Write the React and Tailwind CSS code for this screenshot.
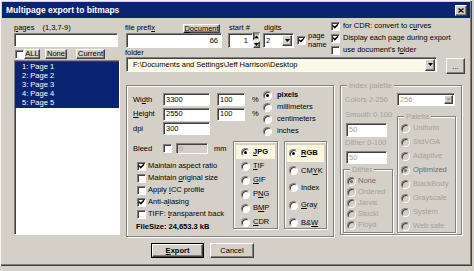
import React from 'react'

const sunken = 'border border-t-[#808080] border-l-[#808080] border-b-white border-r-white shadow-[inset_1px_1px_0_#404040]'
const raised = 'border border-t-white border-l-white border-b-[#404040] border-r-[#404040] shadow-[inset_-1px_-1px_0_#808080]'
const etched = 'border border-[#808080] shadow-[inset_1px_1px_0_#ffffff,1px_1px_0_#ffffff]'
const dim = 'text-[#a4a199]'

function Check({ on, className = '' }) {
  return (
    <span className={`flex h-[9px] w-[9px] shrink-0 items-center justify-center bg-white ${sunken} ${className}`}>
      {on && (
        <svg width="7" height="7" viewBox="0 0 7 7">
          <path d="M1 2.8 L2.8 4.6 L6 1.2" stroke="#000" strokeWidth="1.5" fill="none" />
        </svg>
      )}
    </span>
  )
}

function Radio({ on, off }) {
  return (
    <span
      className={`flex h-[9px] w-[9px] shrink-0 items-center justify-center rounded-full border border-t-[#808080] border-l-[#808080] border-b-white border-r-white shadow-[inset_1px_1px_0_#404040] ${off ? 'bg-[#d4d0c8]' : 'bg-white'}`}
    >
      {on && <span className={`h-[3px] w-[3px] rounded-full ${off ? 'bg-[#77746d]' : 'bg-black'}`} />}
    </span>
  )
}

function Arrow({ className = '', off }) {
  return (
    <span className={`flex items-center justify-center bg-[#d4d0c8] ${raised} ${className}`}>
      <svg width="5" height="3" viewBox="0 0 5 3">
        <path d="M0 0 H5 L2.5 3 Z" fill={off ? '#a4a199' : '#000'} />
      </svg>
    </span>
  )
}

function Group({ title, className = '', off, children }) {
  return (
    <fieldset className={`${etched} ${className}`}>
      {title && (
        <legend className={`ml-[6px] bg-[#d4d0c8] px-[2px] leading-[9px] ${off ? dim : ''}`}>{title}</legend>
      )}
      {children}
    </fieldset>
  )
}

const dithers = ['None', 'Ordered', 'Jarvis', 'Stucki', 'Floyd']
const palettes = ['Uniform', 'StdVGA', 'Adaptive', 'Optimized', 'BlackBody', 'Grayscale', 'System', 'Web safe']

export default function App() {
  return (
    <div className="h-[271px] w-[474px] overflow-hidden bg-[#d4d0c8] font-['Liberation_Sans',Arial,sans-serif] text-[7.5px] leading-none text-black">
      <div className="flex h-[266px] w-[472px] flex-col p-[2px] shadow-[inset_1px_1px_0_#f4f3ef,inset_-1px_-1px_0_#404040,inset_-2px_-2px_0_#808080]">
        <div className="flex h-[16px] shrink-0 items-center bg-[#0b2472] pl-[4px] pr-[3px]">
          <span className="text-[8.5px] font-bold text-white">Multipage export to bitmaps</span>
          <span className={`ml-auto flex h-[11px] w-[12px] items-center justify-center bg-[#d4d0c8] ${raised}`}>
            <svg width="6" height="5" viewBox="0 0 6 5">
              <path d="M0.5 0.5 L5.5 4.5 M5.5 0.5 L0.5 4.5" stroke="#000" strokeWidth="1.4" />
            </svg>
          </span>
        </div>

        <div className="flex">
          {/* pages */}
          <div className="ml-[12px] mt-[4px] flex w-[106px] flex-col">
            <div className="flex h-[11px] items-center">
              <span><u>p</u>ages</span>
              <span className="ml-[8px]">(1,3,7-9)</span>
            </div>
            <div className={`h-[14px] w-[104px] bg-white ${sunken}`} />
            <div className="mt-[2px] flex h-[10px] items-center">
              <Check className="ml-[1px]" />
              <span className={`flex h-[10px] w-[16px] items-center justify-center ${raised}`}>ALL</span>
              <span className={`ml-[5px] flex h-[10px] w-[22px] items-center justify-center ${raised}`}>None</span>
              <span className={`ml-[9px] flex h-[10px] w-[29px] items-center justify-center ${raised}`}>Current</span>
            </div>
            <div className={`mt-[1px] flex h-[175px] w-[106px] flex-col bg-white ${sunken}`}>
              <div className="mt-[1px] bg-[#0b2472] pb-[1px] text-white">
                {[1, 2, 3, 4, 5].map((n) => (
                  <div key={n} className="flex h-[9px] items-center pl-[7px]">
                    {n}: Page {n}
                  </div>
                ))}
              </div>
            </div>
          </div>

          {/* settings */}
          <div className="ml-[5px] flex w-[342px] flex-col">
            <div className="mt-[2px] flex items-start">
              <div className="flex w-[206px] flex-col pt-[2px]">
                <div className="flex h-[26px] items-start">
                  <div className="flex w-[97px] flex-col">
                    <div className="flex h-[11px] items-center justify-between">
                      <span>file prefi<u>x</u></span>
                      <span className={`mr-[2px] flex h-[9px] w-[37px] items-center justify-center self-end ${raised}`}>
                        <u>D</u>ocument
                      </span>
                    </div>
                    <div className={`ml-[1px] flex h-[15px] w-[96px] items-center justify-end bg-white pr-[3px] ${sunken}`}>66</div>
                  </div>
                  <div className="ml-[6px] flex w-[32px] flex-col">
                    <div className="flex h-[11px] items-center pl-[1px]">start #</div>
                    <div className="flex h-[15px]">
                      <div className={`flex w-[25px] items-center justify-end bg-white pr-[4px] ${sunken}`}>1</div>
                      <div className="flex w-[7px] flex-col">
                        <Arrow className="h-[7.5px] rotate-180" />
                        <Arrow className="h-[7.5px]" />
                      </div>
                    </div>
                  </div>
                  <div className="ml-[3px] flex w-[31px] flex-col">
                    <div className="flex h-[11px] items-center pl-[1px]">di<u>g</u>its</div>
                    <div className={`flex h-[15px] items-center bg-white pl-[2px] ${sunken}`}>
                      2
                      <Arrow className="ml-auto mr-[1px] h-[11px] w-[10px]" />
                    </div>
                  </div>
                  <div className="ml-[3px] mt-[8px] flex h-[20px] items-center">
                    <Check on />
                    <div className="ml-[2px] flex flex-col leading-[9.5px]">
                      <span>page</span>
                      <span>name</span>
                    </div>
                  </div>
                </div>
                <div className="flex h-[9px] items-center">folder</div>
              </div>
              <div className="flex flex-col">
                {[
                  [true, <>for CDR: convert to c<u>u</u>rves</>],
                  [true, 'Display each page during export'],
                  [false, <>use document's f<u>o</u>lder</>],
                ].map(([on, label], i) => (
                  <div key={i} className="flex h-[12px] items-center">
                    <Check on={on} />
                    <span className="ml-[3px]">{label}</span>
                  </div>
                ))}
              </div>
            </div>

            <div className="flex h-[17px] items-start">
              <div className={`ml-[1px] flex h-[15px] w-[311px] items-center bg-[#fbfae9] pl-[6px] ${sunken}`}>
                F:\Documents and Settings\Jeff Harrison\Desktop
                <Arrow className="ml-auto mr-[1px] h-[12px] w-[10px]" />
              </div>
              <div className={`ml-[9px] mt-[1px] flex h-[16px] w-[19px] items-end justify-center pb-[3px] ${raised}`}>...</div>
            </div>

            <div className="flex items-start">
              {/* size & format */}
              <div className={`ml-[1px] mt-[11px] flex h-[152px] w-[208px] flex-col ${etched}`}>
                <div className="flex items-start pt-[3px]">
                  <div className="mt-[4px] flex w-[136px] flex-col gap-[1.5px] pl-[6px]">
                    {[
                      [<>Wi<u>d</u>th</>, '3300', '100'],
                      [<><u>H</u>eight</>, '2550', '100'],
                      ['dpi', '300', null],
                    ].map(([label, v, p], i) => (
                      <div key={i} className="flex h-[13px] items-center">
                        <span className="w-[30px]">{label}</span>
                        <div className={`flex h-[13px] w-[47px] items-center bg-white pl-[2px] ${sunken}`}>{v}</div>
                        {p && (
                          <>
                            <div className={`ml-[7px] flex h-[13px] w-[28px] items-center bg-white pl-[2px] ${sunken}`}>{p}</div>
                            <span className="ml-[7px]">%</span>
                          </>
                        )}
                      </div>
                    ))}
                  </div>
                  <div className="flex flex-col">
                    {['pixels', 'millimeters', 'centimeters', 'inches'].map((u, i) => (
                      <div key={u} className="flex h-[12px] items-center">
                        <Radio on={i === 0} />
                        <span className={`ml-[5px] ${i === 0 ? 'font-bold' : ''}`}>{u}</span>
                      </div>
                    ))}
                  </div>
                </div>

                <div className="mt-[4px] flex items-start">
                  <div className="flex w-[106px] flex-col pl-[6px]">
                    <div className="mt-[2px] flex h-[11px] items-center">
                      <span className="w-[30px]">Bleed</span>
                      <Check />
                      <div className={`ml-[4px] flex h-[11px] w-[32px] items-center bg-[#d4d0c8] pl-[2px] ${dim} ${sunken}`}>0</div>
                      <span className="ml-[6px]">mm</span>
                    </div>
                    <div className="mt-[6px] flex flex-col pl-[4px]">
                      {[
                        [true, 'Maintain aspect ratio'],
                        [false, <>Maintain <u>o</u>riginal size</>],
                        [false, <>Apply <u>I</u>CC profile</>],
                        [true, <>Anti-a<u>l</u>iasing</>],
                        [false, <>TIFF: <u>t</u>ransparent back</>],
                      ].map(([on, label], i) => (
                        <div key={i} className="flex h-[12px] items-center">
                          <Check on={on} />
                          <span className="ml-[2px]">{label}</span>
                        </div>
                      ))}
                    </div>
                    <div className="mt-[1px] flex h-[12px] items-center pl-[3px] font-bold">FileSize: 24,653.3 kB</div>
                  </div>

                  <Group className="h-[88px] w-[45px] pt-[3px]">
                    {[
                      [<><u>J</u>PG</>, true],
                      [<><u>T</u>IF</>],
                      [<><u>G</u>IF</>],
                      [<>P<u>N</u>G</>],
                      [<>B<u>M</u>P</>],
                      [<><u>C</u>DR</>],
                    ].map(([label, on], i) => (
                      <div key={i} className={`mx-[2px] flex h-[14px] items-center pl-[5px] ${on ? 'bg-[#fbf7dc]' : ''}`}>
                        <Radio on={on} />
                        <span className={`ml-[3px] ${on ? 'font-bold' : ''}`}>{label}</span>
                      </div>
                    ))}
                  </Group>

                  <Group className="ml-[6px] h-[88px] w-[43px] pt-[2.5px]">
                    {[
                      [<><u>R</u>GB</>, true],
                      [<>CM<u>Y</u>K</>],
                      ['Index'],
                      [<><u>G</u>ray</>],
                      [<>B&amp;<u>W</u></>],
                    ].map(([label, on], i) => (
                      <div key={i} className={`mx-[2px] flex h-[17.3px] items-center pl-[2px] ${on ? 'bg-[#fbf7dc]' : ''}`}>
                        <Radio on={on} />
                        <span className={`ml-[3px] ${on ? 'font-bold' : ''}`}>{label}</span>
                      </div>
                    ))}
                  </Group>
                </div>
              </div>

              {/* index palette */}
              <Group title="Index palette" off className="ml-[6px] mt-[7px] h-[154px] w-[122px]">
                <div className="mt-[3px] flex h-[13px] items-center pl-[4px]">
                  <span className={`w-[52px] ${dim}`}>Colors 2-256</span>
                  <div className={`flex h-[13px] w-[58px] items-center bg-white pl-[2px] ${dim} ${sunken}`}>
                    256
                    <Arrow off className="ml-auto mr-[1px] h-[9px] w-[9px]" />
                  </div>
                </div>
                <div className="mt-[3px] flex items-start">
                  <div className="flex w-[56px] flex-col">
                    <div className={`mt-[1px] flex h-[10px] items-center pl-[4px] ${dim}`}>Smooth 0-100</div>
                    <div className={`ml-[5px] mt-[3px] flex h-[14px] w-[41px] items-center bg-white pl-[2px] ${dim} ${sunken}`}>50</div>
                    <div className={`mt-[1px] flex h-[10px] items-center pl-[4px] ${dim}`}>Dither 0-100</div>
                    <div className={`ml-[5px] mt-[3px] flex h-[13px] w-[41px] items-center bg-white pl-[2px] ${dim} ${sunken}`}>50</div>
                    <Group title="Dither" off className="ml-[2px] mt-[1px] h-[68px] w-[50px] pt-[1.5px]">
                      {dithers.map((d, i) => (
                        <div key={d} className="flex h-[11px] items-center pl-[3px]">
                          <Radio off on={i === 0} />
                          <span className={`ml-[2px] ${i === 0 ? 'text-[#6f6c66]' : dim}`}>{d}</span>
                        </div>
                      ))}
                    </Group>
                  </div>
                  <Group title="Palette" off className="mt-[3px] h-[121px] w-[59px]">
                    {palettes.map((p, i) => (
                      <div key={p} className="flex h-[14px] items-center pl-[3px]">
                        <Radio off on={i === 3} />
                        <span className={`ml-[3px] ${i === 3 ? 'text-[#6f6c66]' : dim}`}>{p}</span>
                      </div>
                    ))}
                  </Group>
                </div>
              </Group>
            </div>
          </div>
        </div>

        <div className="mt-[6px] flex pl-[149px]">
          <div className="h-[15px] w-[53px] border border-black">
            <div className={`flex h-full w-full items-center justify-center font-bold ${raised}`}>
              <span><u>E</u>xport</span>
            </div>
          </div>
          <div className={`ml-[6px] flex h-[15px] w-[44px] items-center justify-center ${raised}`}>Cancel</div>
        </div>
      </div>
    </div>
  )
}
